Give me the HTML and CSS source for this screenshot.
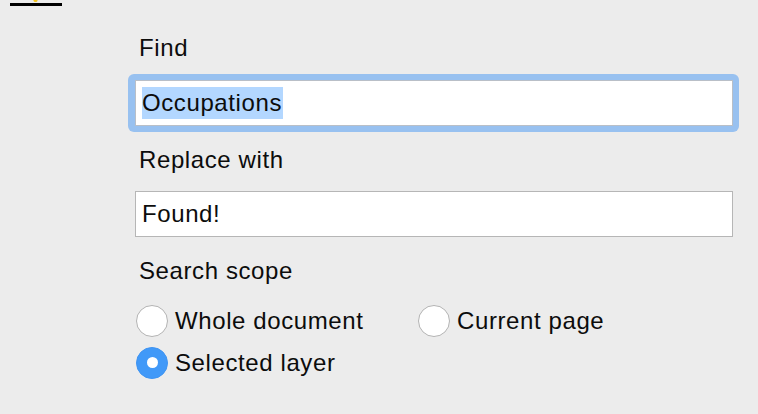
FILE: index.html
```html
<!DOCTYPE html>
<html>
<head>
<meta charset="utf-8">
<link rel="stylesheet" href="styles.css">
</head>
<body>
<div class="top">
  <svg width="52" height="6" viewBox="0 0 52 6">
    <ellipse cx="25.5" cy="0.5" rx="2" ry="1.6" fill="#f3c31b"/>
    <rect x="0" y="3" width="52" height="3" fill="#000"/>
  </svg>
</div>
<div class="form">
  <div class="field">
    <div class="label">Find</div>
    <div class="ring">
      <div class="input"><span class="sel">Occupations</span></div>
    </div>
  </div>
  <div class="field">
    <div class="label">Replace with</div>
    <div class="input">Found!</div>
  </div>
  <div class="field scope">
    <div class="label">Search scope</div>
    <div class="radios">
      <div class="radio-item"><span class="radio"></span><span>Whole document</span></div>
      <div class="radio-item"><span class="radio"></span><span>Current page</span></div>
      <div class="radio-item"><span class="radio checked"></span><span>Selected layer</span></div>
    </div>
  </div>
</div>
</body>
</html>
```
FILE: styles.css
```css
html, body {
  margin: 0;
  padding: 0;
  background: #ececec;
}
body {
  width: 758px;
  height: 414px;
  overflow: hidden;
  font-family: "Liberation Sans", Arial, sans-serif;
  font-size: 24px;
  letter-spacing: 0.6px;
  line-height: 28px;
  color: #0c0c0c;
}
.top svg {
  display: block;
  margin-left: 10px;
}
.form {
  display: flex;
  flex-direction: column;
  gap: 20px;
  padding: 28px 25px 0 135px;
}
.field {
  display: flex;
  flex-direction: column;
  gap: 17.5px;
}
.scope {
  gap: 20px;
}
.label {
  padding-left: 4px;
}
.ring {
  margin: -6px -6px -6px -7px;
  padding: 6px 6px 6px 7px;
  border-radius: 6px;
  background: #98c1f0;
}
.input {
  box-sizing: border-box;
  height: 46px;
  background: #fff;
  border: 1px solid #b6b6b6;
  padding-left: 6px;
  display: flex;
  align-items: center;
}
.ring .input {
  border-color: #b9bfc7;
}
.sel {
  display: inline-block;
  line-height: 32px;
  background: #b3d7ff;
  padding-right: 1px;
}
.radios {
  display: grid;
  grid-template-columns: 282px auto;
  row-gap: 9.5px;
  padding-left: 1px;
}
.radio-item {
  display: flex;
  align-items: center;
  gap: 7px;
  height: 32px;
}
.radio {
  box-sizing: border-box;
  width: 32px;
  height: 32px;
  border-radius: 50%;
  background: #fff;
  border: 1px solid #b3b3b3;
  flex: none;
  display: flex;
  align-items: center;
  justify-content: center;
}
.radio.checked {
  background: #4199f8;
  border-color: #3f94f2;
}
.radio.checked::after {
  content: "";
  width: 11px;
  height: 11px;
  border-radius: 50%;
  background: #fff;
}
```
